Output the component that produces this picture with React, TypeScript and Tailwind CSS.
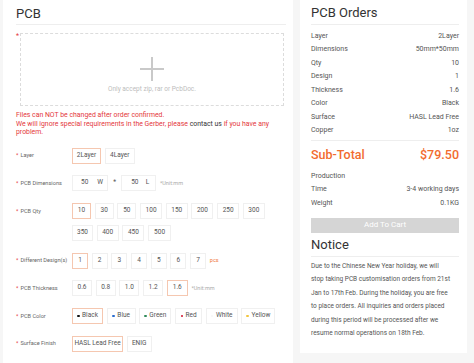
import React from "react";

const font = { fontFamily: "Roboto, 'Liberation Sans', sans-serif" };

type Opt = { t: string; w: string; a?: boolean; dot?: string };

function Btn({ o }: { o: Opt }) {
  return (
    <div
      className={
        "h-[16px] flex items-center justify-center gap-[2.5px] border text-[6.5px] text-[#555] bg-white " +
        o.w +
        " " +
        (o.a ? "border-[#f5c7b0]" : "border-[#f0f0f0]")
      }
    >
      {o.dot && <span className={"w-[2.5px] h-[2.5px] rounded-full " + o.dot} />}
      <span>{o.t}</span>
    </div>
  );
}

function Row({ label, children }: { label: string; children: React.ReactNode }) {
  return (
    <div className="flex items-start">
      <div className="w-[56px] shrink-0 h-[16px] flex items-center text-[5.6px] text-[#666] whitespace-nowrap">
        <span className="text-[#e4393c] mr-[2px]">*</span>
        {label}
      </div>
      <div className="flex flex-wrap items-center gap-x-[3.7px] gap-y-[6px] w-[212px]">{children}</div>
    </div>
  );
}

const layer: Opt[] = [
  { t: "2Layer", w: "w-[29px]", a: true },
  { t: "4Layer", w: "w-[30px]" },
];
const qty: Opt[] = [
  { t: "10", w: "w-[19px]", a: true },
  { t: "30", w: "w-[19px]" },
  { t: "50", w: "w-[19px]" },
  { t: "100", w: "w-[22px]" },
  { t: "150", w: "w-[22px]" },
  { t: "200", w: "w-[22px]" },
  { t: "250", w: "w-[22px]" },
  { t: "300", w: "w-[22px]" },
  { t: "350", w: "w-[21px]" },
  { t: "400", w: "w-[22px]" },
  { t: "450", w: "w-[22px]" },
  { t: "500", w: "w-[23px]" },
];
const designs: Opt[] = ["1", "2", "3", "4", "5", "6", "7"].map((t, i) => ({ t, w: "w-[16px]", a: i === 0 }));
const thick: Opt[] = [
  { t: "0.6", w: "w-[20px]" },
  { t: "0.8", w: "w-[20px]" },
  { t: "1.0", w: "w-[20px]" },
  { t: "1.2", w: "w-[20px]" },
  { t: "1.6", w: "w-[21px]", a: true },
];
const colors: Opt[] = [
  { t: "Black", w: "w-[31px]", a: true, dot: "bg-[#111]" },
  { t: "Blue", w: "w-[29px]", dot: "bg-[#2a6ccf]" },
  { t: "Green", w: "w-[32px]", dot: "bg-[#2f8a5a]" },
  { t: "Red", w: "w-[27px]", dot: "bg-[#d0102a]" },
  { t: "White", w: "w-[32px]", dot: "bg-[#f6f6f6]" },
  { t: "Yellow", w: "w-[34px]", dot: "bg-[#f2c53d]" },
];
const surface: Opt[] = [
  { t: "HASL Lead Free", w: "w-[51px]", a: true },
  { t: "ENIG", w: "w-[25px]" },
];

const orders: [string, string][] = [
  ["Layer", "2Layer"],
  ["Dimensions", "50mm*50mm"],
  ["Qty", "10"],
  ["Design", "1"],
  ["Thickness", "1.6"],
  ["Color", "Black"],
  ["Surface", "HASL Lead Free"],
  ["Copper", "1oz"],
];

export default function App() {
  return (
    <div className="w-[474px] h-[363px] overflow-hidden bg-[#f6f6f6] flex" style={font}>
      {/* Left panel */}
      <div className="ml-[3px] w-[290px] bg-white pl-[13px] pr-[7px] flex flex-col">
        <div className="h-[25px] flex items-end pb-[3px] border-b border-[#eeeeee] text-[13px] leading-[15px] text-[#333]">
          PCB
        </div>
        <div className="mt-[8px] flex">
          <span className="text-[#e4393c] text-[7px] leading-[6px] w-[4px]">*</span>
          <div className="w-[264px] h-[73px] border border-dashed border-[#dcdcdc] flex flex-col items-center">
            <svg width="26" height="26" viewBox="0 0 26 26" className="mt-[22px]">
              <rect x="12" y="1" width="2" height="24" fill="#c9c9c9" />
              <rect x="1" y="12" width="24" height="2" fill="#c9c9c9" />
            </svg>
            <div className="mt-[3px] text-[6.5px] text-[#bdbdbd]">Only accept zip, rar or PcbDoc.</div>
          </div>
        </div>
        <div className="mt-[5px] text-[6.9px] leading-[8.5px] text-[#e4393c] whitespace-nowrap">
          <div>Files can NOT be changed after order confirmed.</div>
          <div>
            We will ignore special requirements in the Gerber, please{" "}
            <span className="text-[#333]">contact us</span> if you have any
          </div>
          <div>problem.</div>
        </div>
        <div className="mt-[11px] flex flex-col gap-y-[11.7px]">
          <Row label="Layer">
            {layer.map((o) => (
              <Btn key={o.t} o={o} />
            ))}
          </Row>
          <Row label="PCB Dimensions">
            <div className="w-[36px] h-[16px] border border-[#f0f0f0] flex items-center justify-between pl-[8px] pr-[4px] text-[6.5px] text-[#555]">
              <span>50</span>
              <span>W</span>
            </div>
            <span className="text-[6.5px] text-[#555] mx-[1.5px]">*</span>
            <div className="w-[35px] h-[16px] border border-[#f0f0f0] flex items-center justify-between pl-[9px] pr-[6px] text-[6.5px] text-[#555]">
              <span>50</span>
              <span>L</span>
            </div>
            <span className="text-[5.5px] text-[#aaa]">*Unit:mm</span>
          </Row>
          <Row label="PCB Qty">
            {qty.map((o) => (
              <Btn key={o.t} o={o} />
            ))}
          </Row>
          <Row label="Different Design(s)">
            {designs.map((o) => (
              <Btn key={o.t} o={o} />
            ))}
            <span className="text-[5.5px] text-[#f07a3a]">pcs</span>
          </Row>
          <Row label="PCB Thickness">
            {thick.map((o) => (
              <Btn key={o.t} o={o} />
            ))}
            <span className="text-[5.5px] text-[#aaa]">*Unit:mm</span>
          </Row>
          <Row label="PCB Color">
            {colors.map((o) => (
              <Btn key={o.t} o={o} />
            ))}
          </Row>
          <Row label="Surface Finish">
            {surface.map((o) => (
              <Btn key={o.t} o={o} />
            ))}
          </Row>
        </div>
      </div>

      {/* Right column */}
      <div className="ml-[7px] w-[167px] self-start bg-white pl-[11px] pr-[8px] pb-[12px]">
        <div className="h-[25px] flex items-end pb-[4px] border-b border-[#eeeeee] text-[13px] leading-[15px] text-[#333]">
          PCB Orders
        </div>
        <div className="pt-[4px] pb-[3px] border-b border-[#eeeeee]">
          {orders.map(([k, v]) => (
            <div key={k} className="flex justify-between h-[13.5px] items-center text-[7px] text-[#555]">
              <span>{k}</span>
              <span>{v}</span>
            </div>
          ))}
        </div>
        <div className="h-[28px] flex items-center justify-between text-[12.5px] font-medium text-[#f26b2e]">
          <span>Sub-Total</span>
          <span>$79.50</span>
        </div>
        <div className="text-[7px] text-[#555]">
          <div className="h-[13.5px] flex items-center">Production</div>
          <div className="h-[13.5px] flex items-center justify-between">
            <span>Time</span>
            <span>3-4 working days</span>
          </div>
          <div className="h-[13.5px] flex items-center justify-between">
            <span>Weight</span>
            <span>0.1KG</span>
          </div>
        </div>
        <div className="mt-[8px] h-[15px] bg-[#d5d5d5] flex items-center justify-center text-[8px] text-white">
          Add To Cart
        </div>
        <div className="h-[24px] flex items-end pb-[4px] border-b border-[#eeeeee] text-[13px] leading-[15px] text-[#333]">
          Notice
        </div>
        <div className="pt-[3px] text-[6.5px] leading-[13.6px] text-[#555] whitespace-nowrap">
          <div>Due to the Chinese New Year holiday, we will</div>
          <div>stop taking PCB customisation orders from 21st</div>
          <div>Jan to 17th Feb. During the holiday, you are free</div>
          <div>to place orders. All inquiries and orders placed</div>
          <div>during this period will be processed after we</div>
          <div>resume normal operations on 18th Feb.</div>
        </div>
      </div>
    </div>
  );
}
